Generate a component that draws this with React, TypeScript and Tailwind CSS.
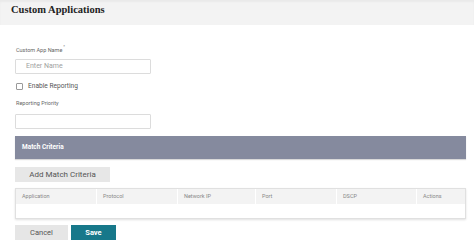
import React from "react";

const cols = [
  { name: "Application", w: "w-[80px]" },
  { name: "Protocol", w: "w-[80px]" },
  { name: "Network IP", w: "w-[77px]" },
  { name: "Port", w: "w-[80px]" },
  { name: "DSCP", w: "w-[79px]" },
  { name: "Actions", w: "flex-1" },
];

export default function App() {
  return (
    <div className="w-[474px] h-[246px] bg-white overflow-hidden" style={{ fontFamily: "Roboto, 'Liberation Sans', sans-serif" }}>
      <div className="h-[25px] bg-[#f3f3f3] flex items-center pl-[11px] pb-[4px] shadow-[inset_0_2px_2px_rgba(0,0,0,0.04)]">
        <span className="text-[10.5px] font-bold text-[#222] leading-none" style={{ fontFamily: "'Liberation Serif', serif" }}>
          Custom Applications
        </span>
      </div>
      <div className="pl-[15px] pr-[8px]">
        <div className="mt-[21px] h-[8px] flex items-center text-[5.5px] text-[#666] pl-[1px]">
          Custom App Name<sup className="text-[4px] ml-[1px] -mt-[3px]">*</sup>
        </div>
        <div className="mt-[5px] w-[136px] h-[15px] border border-[#dcdcdc] rounded-[1px] flex items-center pl-[10px] text-[7px] text-[#a0a0a0]">
          Enter Name
        </div>
        <div className="mt-[9px] h-[7px] flex items-center gap-[5px] pl-[1px]">
          <div className="w-[7px] h-[7px] border border-[#9a9a9a] rounded-[1px]" />
          <span className="text-[6.6px] text-[#555]">Enable Reporting</span>
        </div>
        <div className="mt-[9px] h-[8px] flex items-center text-[5.5px] text-[#666] pl-[1px]">Reporting Priority</div>
        <div className="mt-[7px] w-[136px] h-[15px] border border-[#dcdcdc] rounded-[1px]" />
        <div className="mt-[7px] w-[451px] h-[23px] bg-[#858a9e] flex items-center pl-[7px] shadow-[0_1px_1px_rgba(0,0,0,0.15)]">
          <span className="text-[6.5px] font-bold text-white">Match Criteria</span>
        </div>
        <div className="mt-[8px] w-[95px] h-[15px] bg-[#e7e7e7] flex items-center justify-center text-[8px] text-[#555]">
          Add Match Criteria
        </div>
        <div className="mt-[6px] w-[451px] h-[31px] border border-[#e0e0e0] shadow-[0_1px_2px_rgba(0,0,0,0.12)] flex flex-col">
          <div className="h-[15px] flex gap-[1px] bg-white">
            {cols.map((c) => (
              <div key={c.name} className={`${c.w} bg-[#f3f3f3] flex items-center pl-[6px] text-[5.5px] text-[#888]`}>
                {c.name}
              </div>
            ))}
          </div>
          <div className="flex-1 bg-white" />
        </div>
        <div className="mt-[6px] flex gap-[3px]">
          <div className="w-[53px] h-[15px] bg-[#e6e6e6] flex items-center justify-center text-[7.5px] text-[#555]">Cancel</div>
          <div className="w-[45px] h-[15px] bg-[#17788a] flex items-center justify-center text-[7.5px] font-bold text-white">Save</div>
        </div>
      </div>
    </div>
  );
}
